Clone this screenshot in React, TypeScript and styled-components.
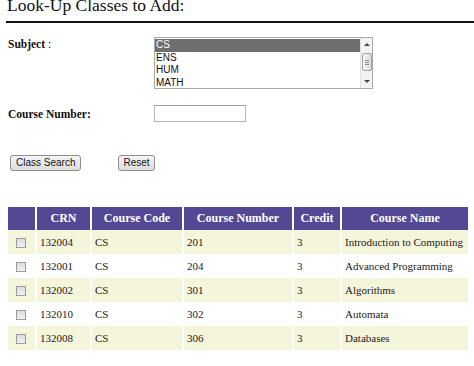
import styled, { createGlobalStyle } from "styled-components";

const GlobalStyle = createGlobalStyle`
  body {
    margin: 0;
    background: #fff;
    color: #1a1a1a;
    font-family: "Liberation Serif", "Times New Roman", serif;
  }
`;

const Page = styled.div`
  padding: 0 0 0 8px;
  overflow: hidden;
`;

const Title = styled.h2`
  margin: -5px 0 0 -1px;
  font-size: 17.5px;
  line-height: 20px;
  font-weight: normal;
  color: #111;
`;

const Rule = styled.div`
  margin: 6px 0 0 -2px;
  height: 2px;
  background: #111;
`;

const FormRow = styled.div<{ $top: number; $center?: boolean }>`
  display: grid;
  grid-template-columns: 146px auto;
  align-items: ${(p) => (p.$center ? "center" : "start")};
  margin-top: ${(p) => p.$top}px;
`;

const Label = styled.div`
  font-size: 11.5px;
  line-height: 14px;
  font-weight: bold;
  color: #111;

  span {
    font-weight: normal;
  }
`;

const ListBox = styled.div`
  display: flex;
  width: 217px;
  height: 50px;
  border: 1px solid #a9a9a9;
  background: #fff;
`;

const Options = styled.div`
  flex: 1;
  padding-top: 1px;
`;

const Option = styled.div<{ $selected?: boolean }>`
  height: 12.5px;
  line-height: 12.5px;
  padding-left: 1px;
  font-family: "Liberation Sans", Arial, sans-serif;
  font-size: 10px;
  background: ${(p) => (p.$selected ? "#6e6e6e" : "transparent")};
  color: ${(p) => (p.$selected ? "#fff" : "#111")};
`;

const ScrollBar = styled.div`
  width: 11px;
  display: flex;
  flex-direction: column;
  align-items: center;
  background: #f3f3f3;
  border-left: 1px solid #e4e4e4;
`;

const Arrow = styled.div<{ $down?: boolean }>`
  height: 13px;
  display: flex;
  align-items: center;
  justify-content: center;

  &::before {
    content: "";
    border-left: 3px solid transparent;
    border-right: 3px solid transparent;
    ${(p) =>
      p.$down
        ? "border-top: 3px solid #444;"
        : "border-bottom: 3px solid #444;"}
  }
`;

const Thumb = styled.div`
  width: 8px;
  height: 16px;
  margin-top: 2px;
  border: 1px solid #a3a3a3;
  border-radius: 2px;
  background: linear-gradient(to right, #f6f6f6, #dcdcdc);
  display: flex;
  flex-direction: column;
  justify-content: center;
  align-items: center;
  gap: 1px;

  i {
    display: block;
    width: 4px;
    height: 1px;
    background: #8a8a8a;
  }
`;

const Spacer = styled.div`
  flex: 1;
`;

const TextInput = styled.input`
  box-sizing: border-box;
  width: 92px;
  height: 17px;
  margin: 0;
  border: 1px solid #b5b5b5;
  border-top-color: #a0a0a0;
  background: #fff;
`;

const ButtonRow = styled.div`
  display: flex;
  gap: 37px;
  margin-top: 33px;
  padding-left: 2px;
`;

const Button = styled.button<{ $pad: number }>`
  height: 16px;
  padding: 0 ${(p) => p.$pad}px;
  margin: 0;
  font-family: "Liberation Sans", Arial, sans-serif;
  font-size: 10px;
  line-height: 14px;
  color: #111;
  border: 1px solid #8e8e8e;
  border-radius: 3px;
  background: linear-gradient(#f5f5f5, #dddddd);
`;

const Table = styled.table`
  margin-top: 36px;
  width: 460px;
  table-layout: fixed;
  border-collapse: collapse;
  font-size: 11px;
`;

const Head = styled.th`
  height: 23px;
  padding: 0;
  background: #524894;
  color: #fff;
  font-size: 12px;
  font-weight: bold;
  text-align: center;
  border-left: 2px solid #fff;

  &:first-child {
    border-left: none;
  }
`;

const Row = styled.tr<{ $shade: boolean }>`
  background: ${(p) => (p.$shade ? "#f5f5dc" : "#fff")};
`;

const Cell = styled.td`
  height: 24px;
  padding: 0 3px;
  color: #1a1a1a;
  border-left: 2px solid #fff;
  white-space: nowrap;

  &:first-child {
    border-left: none;
    text-align: center;
    padding: 0;
  }
`;

const Check = styled.input`
  appearance: none;
  display: block;
  margin: 1px 0 0 8px;
  width: 10px;
  height: 10px;
  border: 1px solid #9a9a9a;
  background: linear-gradient(#dcdcdc, #f4f4f4);
`;

const columns = [
  { label: "", width: 28 },
  { label: "CRN", width: 55 },
  { label: "Course Code", width: 92 },
  { label: "Course Number", width: 110 },
  { label: "Credit", width: 48 },
  { label: "Course Name", width: 127 },
];

const courses = [
  { crn: "132004", code: "CS", num: "201", credit: "3", name: "Introduction to Computing" },
  { crn: "132001", code: "CS", num: "204", credit: "3", name: "Advanced Programming" },
  { crn: "132002", code: "CS", num: "301", credit: "3", name: "Algorithms" },
  { crn: "132010", code: "CS", num: "302", credit: "3", name: "Automata" },
  { crn: "132008", code: "CS", num: "306", credit: "3", name: "Databases" },
];

const subjects = ["CS", "ENS", "HUM", "MATH"];

export default function App() {
  return (
    <>
      <GlobalStyle />
      <Page>
        <Title>Look-Up Classes to Add:</Title>
        <Rule />

        <FormRow $top={14}>
          <Label>
            Subject <span>:</span>
          </Label>
          <ListBox>
            <Options>
              {subjects.map((s, i) => (
                <Option key={s} $selected={i === 0}>
                  {s}
                </Option>
              ))}
            </Options>
            <ScrollBar>
              <Arrow />
              <Thumb>
                <i />
                <i />
                <i />
              </Thumb>
              <Spacer />
              <Arrow $down />
            </ScrollBar>
          </ListBox>
        </FormRow>

        <FormRow $top={16} $center>
          <Label>Course Number:</Label>
          <TextInput type="text" />
        </FormRow>

        <ButtonRow>
          <Button $pad={5}>Class Search</Button>
          <Button $pad={4}>Reset</Button>
        </ButtonRow>

        <Table>
          <colgroup>
            {columns.map((c, i) => (
              <col key={i} style={{ width: c.width }} />
            ))}
          </colgroup>
          <thead>
            <tr>
              {columns.map((c, i) => (
                <Head key={i}>{c.label}</Head>
              ))}
            </tr>
          </thead>
          <tbody>
            {courses.map((c, i) => (
              <Row key={c.crn} $shade={i % 2 === 0}>
                <Cell>
                  <Check type="checkbox" />
                </Cell>
                <Cell>{c.crn}</Cell>
                <Cell>{c.code}</Cell>
                <Cell>{c.num}</Cell>
                <Cell>{c.credit}</Cell>
                <Cell>{c.name}</Cell>
              </Row>
            ))}
          </tbody>
        </Table>
      </Page>
    </>
  );
}
